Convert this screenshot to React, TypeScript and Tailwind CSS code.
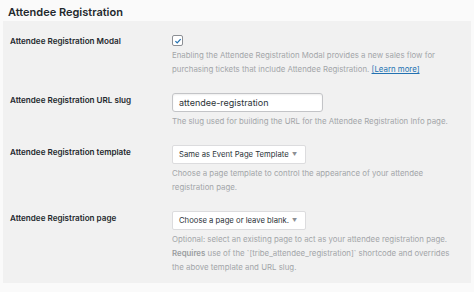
import React from 'react';

const Label = ({ children }: { children: React.ReactNode }) => (
  <div className="w-[162px] shrink-0 text-[8.1px] leading-[14px] font-semibold text-[#23282d]">
    {children}
  </div>
);

const Help = ({ children }: { children: React.ReactNode }) => (
  <p className="mt-[2px] pr-2 text-[7.85px] leading-[14px] text-[#a3a6a9]">{children}</p>
);

const Select = ({ value }: { value: string }) => (
  <div className="flex h-[19px] w-[134px] items-center rounded-[2px] border border-[#dcdcde] bg-white pl-[6px] pr-[8px] text-[7.7px] whitespace-nowrap text-[#2c3338]">
    <span>{value}</span>
    <span className="ml-auto text-[5px] text-[#8c8f94]">▼</span>
  </div>
);

export default function App() {
  return (
    <div className="h-[292px] w-[474px] bg-[#fafafa] font-[Inter,sans-serif]">
      <h2 className="h-[21px] px-2 pt-[4px] text-[11px] leading-[16px] font-semibold text-[#23282d]">
        Attendee Registration
      </h2>
      <div className="mx-[3px] h-[262px] bg-[#f1f1f1] pl-[7px] pt-[13px]">
        {/* Modal */}
        <div className="flex">
          <Label>Attendee Registration Modal</Label>
          <div className="flex-1">
            <div className="mt-[1px] flex h-[11px] w-[11px] items-center justify-center rounded-[2px] border border-[#8c8f94] bg-white">
              <svg viewBox="0 0 10 10" className="h-[8px] w-[8px]">
                <path d="M1.8 5.2 L4 7.3 L8.3 2.6" fill="none" stroke="#2271b1" strokeWidth="1.6" />
              </svg>
            </div>
            <Help>
              Enabling the Attendee Registration Modal provides a new sales flow for purchasing tickets that
              include Attendee Registration.{' '}
              <a className="text-[#2271b1] underline">[Learn more]</a>
            </Help>
          </div>
        </div>

        {/* URL slug */}
        <div className="mt-[17px] flex">
          <Label>Attendee Registration URL slug</Label>
          <div className="flex-1">
            <div className="flex h-[19px] w-[151px] items-center rounded-[3px] border border-[#c3c4c7] bg-white px-[6px] text-[9px] text-[#2c3338] shadow-[inset_0_1px_2px_rgba(0,0,0,0.07)]">
              attendee-registration
            </div>
            <Help>The slug used for building the URL for the Attendee Registration Info page.</Help>
          </div>
        </div>

        {/* Template */}
        <div className="mt-[17px] flex">
          <Label>Attendee Registration template</Label>
          <div className="flex-1">
            <Select value="Same as Event Page Template" />
            <Help>Choose a page template to control the appearance of your attendee registration page.</Help>
          </div>
        </div>

        {/* Page */}
        <div className="mt-[17px] flex">
          <Label>Attendee Registration page</Label>
          <div className="flex-1">
            <Select value="Choose a page or leave blank." />
            <Help>
              Optional: select an existing page to act as your attendee registration page.{' '}
              <strong className="font-semibold text-[#9a9da0]">Requires</strong> use of the
              `[tribe_attendee_registration]` shortcode and overrides the above template and URL slug.
            </Help>
          </div>
        </div>
      </div>
    </div>
  );
}
